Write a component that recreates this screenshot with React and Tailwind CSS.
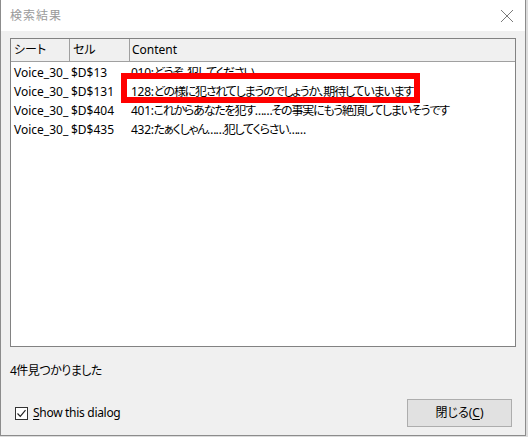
import React from 'react';

const rows = [
  { sheet: 'Voice_30_', cell: '$D$13', no: '010:', text: 'どうぞ、犯してください' },
  { sheet: 'Voice_30_', cell: '$D$131', no: '128:', text: 'どの様に犯されてしまうのでしょうか、期待していまいます' },
  { sheet: 'Voice_30_', cell: '$D$404', no: '401:', text: 'これからあなたを犯す……その事実にもう絶頂してしまいそうです' },
  { sheet: 'Voice_30_', cell: '$D$435', no: '432:', text: 'たぁくしゃん……犯してくらさい……' },
];

const font = "font-['Noto_Sans','Noto_Sans_CJK_JP',sans-serif] [font-feature-settings:'palt']";

function App() {
  return (
    <div className={`w-[528px] h-[437px] bg-[#dcdcdc] overflow-hidden ${font}`}>
      {/* window */}
      <div className="relative w-[526px] h-[436px] border-l border-r border-b border-[#8c8c8c] bg-[#f0f0f0] flex flex-col">
        {/* title bar */}
        <div className="h-[31px] bg-white flex items-center justify-between pl-[9px] pr-[10px] shrink-0">
          <span className="text-[12px] text-[#9a9a9a] tracking-[1px]">検索結果</span>
          <svg width="14" height="14" viewBox="0 0 14 14" className="mr-[1px]">
            <path d="M1 1 L13 13 M13 1 L1 13" stroke="#7a7a7a" strokeWidth="1" />
          </svg>
        </div>

        {/* list view */}
        <div className="mt-[7px] mx-[9px] h-[309px] border border-[#828282] bg-white text-[12px] text-black leading-none">
          <div className="flex h-[23px] bg-[#f0f0f0] border-b border-[#a0a0a0]">
            <div className="w-[59px] border-r border-[#a0a0a0] flex items-center pl-[3px]">シート</div>
            <div className="w-[60px] border-r border-[#a0a0a0] flex items-center pl-[3px]">セル</div>
            <div className="flex-1 flex items-center pl-[2px]">Content</div>
          </div>
          <div className="pt-[1px]">
            {rows.map((r) => (
              <div key={r.cell} className="flex h-[19px] items-center whitespace-nowrap">
                <div className="w-[58px] overflow-hidden pl-[3px]">{r.sheet}</div>
                <div className="w-[60px] overflow-hidden pl-[2px]">{r.cell}</div>
                <div className="flex-1 overflow-hidden pl-[2px]">
                  <span className="tracking-[-0.3px]">{r.no}</span>
                  <span className="tracking-[-1.2px]">{r.text}</span>
                </div>
              </div>
            ))}
          </div>
        </div>

        {/* highlight annotation */}
        <div className="absolute left-[120px] top-[73px] w-[299px] h-[30px] border-[6px] border-[#ff0000] pointer-events-none" />

        <div className="mt-[15px] ml-[9px] text-[12px] text-black tracking-[-0.5px]">4件見つかりました</div>

        <div className="mt-[19px] flex items-center justify-between pl-[14px] pr-[13px]">
          <label className="flex items-center gap-[5px] text-[12px] text-black tracking-[-0.3px]">
            <span className="w-[13px] h-[13px] border border-[#333] bg-white flex items-center justify-center">
              <svg width="11" height="11" viewBox="0 0 11 11">
                <path d="M1.5 5.5 L4.3 8.3 L9.5 2.2" fill="none" stroke="#222" strokeWidth="1.2" />
              </svg>
            </span>
            <span><span className="underline underline-offset-2">S</span>how this dialog</span>
          </label>
          <button className="w-[105px] h-[28px] border border-[#adadad] bg-[#e1e1e1] text-[12px] text-black">
            閉じる(<span className="underline underline-offset-2">C</span>)
          </button>
        </div>
      </div>
    </div>
  );
}

export default App;
